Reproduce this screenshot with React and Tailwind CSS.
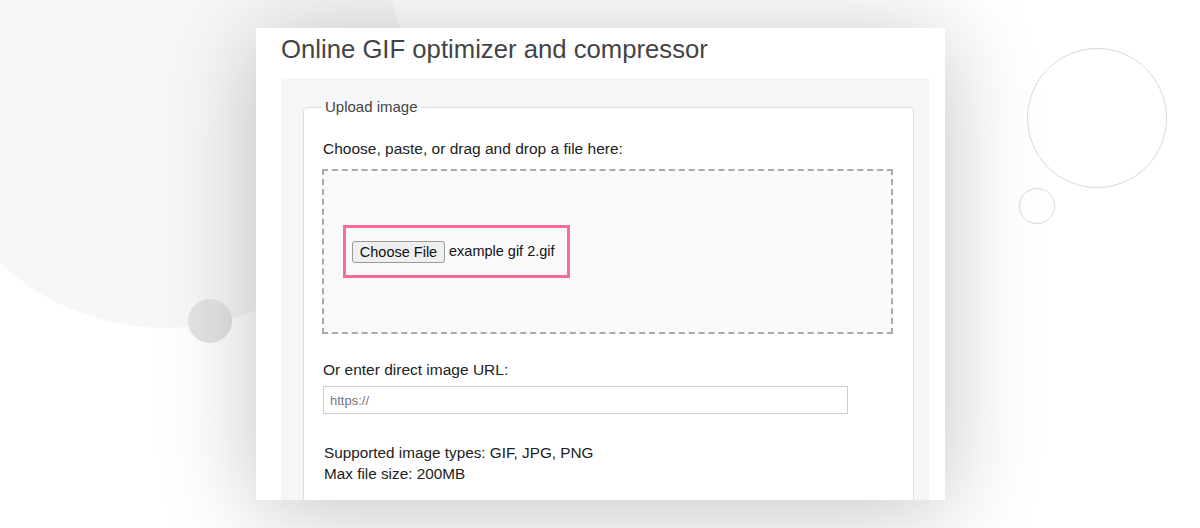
export default function App() {
  return (
    <div
      className="relative w-[1200px] h-[528px] overflow-hidden bg-white"
      style={{ fontFamily: '"Liberation Sans", Arial, sans-serif' }}
    >
      {/* decorative background shapes */}
      <div className="absolute left-[-77px] top-[-156px] w-[484px] h-[484px] rounded-full bg-[#f7f7f8]" />
      <div className="absolute left-[188px] top-[299px] w-[44px] h-[44px] rounded-full bg-[#e4e4e4]" />
      <div className="absolute left-[1027px] top-[48px] w-[140px] h-[140px] rounded-full border border-[#d9d9d9]" />
      <div className="absolute left-[1019px] top-[188px] w-[36px] h-[36px] rounded-full border border-[#d9d9d9]" />

      <div className="relative ml-[256px] mt-[28px] w-[689px] h-[472px] overflow-hidden bg-white pl-[25px] pr-[16px] shadow-[0_10px_90px_rgba(0,0,0,0.24)]">
        <h1 className="pt-[5px] text-[25.7px] leading-[32px] text-[#444] font-normal">
          Online GIF optimizer and compressor
        </h1>

        <div className="mt-[13px] h-[500px] bg-[#f5f6f7] pt-[20px] pl-[22px] pr-[15px]">
          <fieldset className="h-[500px] rounded-[4px] border border-[#dedede] bg-white pl-[18px] pr-[20px]">
            <legend className="px-[3px] text-[15px] leading-[18px] text-[#444]">
              Upload image
            </legend>

            <p className="mt-[23px] pl-[1px] text-[15.5px] leading-5 text-[#222]">
              Choose, paste, or drag and drop a file here:
            </p>

            <div className="mt-[10px] h-[165px] flex items-center border-2 border-dashed border-[#aaaaaa] bg-[#fafafa] pl-[19px]">
              <div className="flex items-center border-[3px] border-[#f96a9f] pl-[6px] pr-[12px] pt-[13px] pb-[12px]">
                <button className="h-[22px] w-[93px] rounded-[3px] border border-[#9a9a9a] bg-[#efefef] text-[14.5px] leading-none text-[#111]">
                  Choose File
                </button>
                <span className="ml-[4px] text-[14.5px] text-[#111]">example gif 2.gif</span>
              </div>
            </div>

            <p className="mt-[26px] pl-[1px] text-[15.5px] leading-5 text-[#222]">
              Or enter direct image URL:
            </p>
            <input
              className="mt-[6px] ml-[1px] block h-[28px] w-[525px] border border-[#cfcfcf] px-[6px] text-[13px] text-[#222] placeholder:text-[#777] outline-none"
              placeholder="https://"
            />

            <div className="mt-[28px] pl-[2px] text-[15.3px] leading-[21px] text-[#222]">
              <p>Supported image types: GIF, JPG, PNG</p>
              <p>Max file size: 200MB</p>
            </div>
          </fieldset>
        </div>
      </div>
    </div>
  );
}
